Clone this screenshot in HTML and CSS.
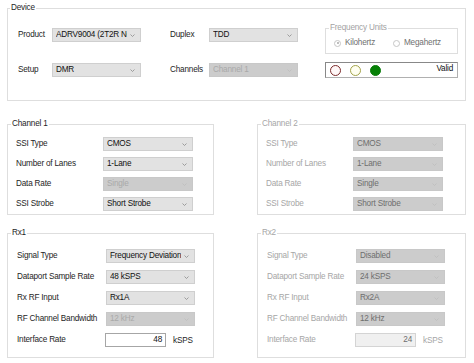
FILE: index.html
```html
<!DOCTYPE html>
<html>
<head>
<meta charset="utf-8">
<link rel="stylesheet" href="styles.css">
</head>
<body>
<div class="page">
  <fieldset class="group device">
    <legend>Device</legend>
    <div class="device-grid">
      <span class="lbl c1 r1">Product</span>
      <div class="combo c2 r1"><span class="val">ADRV9004 (2T2R Non-LVDS)</span><svg class="arr" viewBox="0 0 5 3"><path d="M0.5 0.5 L2.5 2.5 L4.5 0.5"/></svg></div>
      <span class="lbl c4 r1">Duplex</span>
      <div class="combo c5 r1"><span class="val">TDD</span><svg class="arr" viewBox="0 0 5 3"><path d="M0.5 0.5 L2.5 2.5 L4.5 0.5"/></svg></div>
      <fieldset class="freq c7 r1">
        <legend>Frequency Units</legend>
        <div class="radios">
          <label class="radio"><span class="dot checked"></span>Kilohertz</label>
          <label class="radio"><span class="dot"></span>Megahertz</label>
        </div>
      </fieldset>
      <span class="lbl c1 r2">Setup</span>
      <div class="combo c2 r2"><span class="val">DMR</span><svg class="arr" viewBox="0 0 5 3"><path d="M0.5 0.5 L2.5 2.5 L4.5 0.5"/></svg></div>
      <span class="lbl c4 r2">Channels</span>
      <div class="combo dis c5 r2"><span class="val">Channel 1</span><svg class="arr" viewBox="0 0 5 3"><path d="M0.5 0.5 L2.5 2.5 L4.5 0.5"/></svg></div>
      <div class="leds c7 r2">
        <span class="led red"></span>
        <span class="led yellow"></span>
        <span class="led green"></span>
        <span class="status">Valid</span>
      </div>
    </div>
  </fieldset>

  <div class="pair">
    <fieldset class="group chan">
      <legend>Channel 1</legend>
      <div class="row"><span class="lbl">SSI Type</span><div class="combo"><span class="val">CMOS</span><svg class="arr" viewBox="0 0 5 3"><path d="M0.5 0.5 L2.5 2.5 L4.5 0.5"/></svg></div></div>
      <div class="row"><span class="lbl">Number of Lanes</span><div class="combo"><span class="val">1-Lane</span><svg class="arr" viewBox="0 0 5 3"><path d="M0.5 0.5 L2.5 2.5 L4.5 0.5"/></svg></div></div>
      <div class="row"><span class="lbl">Data Rate</span><div class="combo dis"><span class="val">Single</span><svg class="arr" viewBox="0 0 5 3"><path d="M0.5 0.5 L2.5 2.5 L4.5 0.5"/></svg></div></div>
      <div class="row"><span class="lbl">SSI Strobe</span><div class="combo"><span class="val">Short Strobe</span><svg class="arr" viewBox="0 0 5 3"><path d="M0.5 0.5 L2.5 2.5 L4.5 0.5"/></svg></div></div>
    </fieldset>
    <fieldset class="group chan off">
      <legend>Channel 2</legend>
      <div class="row"><span class="lbl">SSI Type</span><div class="combo"><span class="val">CMOS</span><svg class="arr" viewBox="0 0 5 3"><path d="M0.5 0.5 L2.5 2.5 L4.5 0.5"/></svg></div></div>
      <div class="row"><span class="lbl">Number of Lanes</span><div class="combo"><span class="val">1-Lane</span><svg class="arr" viewBox="0 0 5 3"><path d="M0.5 0.5 L2.5 2.5 L4.5 0.5"/></svg></div></div>
      <div class="row"><span class="lbl">Data Rate</span><div class="combo"><span class="val">Single</span><svg class="arr" viewBox="0 0 5 3"><path d="M0.5 0.5 L2.5 2.5 L4.5 0.5"/></svg></div></div>
      <div class="row"><span class="lbl">SSI Strobe</span><div class="combo"><span class="val">Short Strobe</span><svg class="arr" viewBox="0 0 5 3"><path d="M0.5 0.5 L2.5 2.5 L4.5 0.5"/></svg></div></div>
    </fieldset>
  </div>

  <div class="pair rxpair">
    <fieldset class="group rx">
      <legend>Rx1</legend>
      <div class="row"><span class="lbl">Signal Type</span><div class="combo"><span class="val">Frequency Deviation</span><svg class="arr" viewBox="0 0 5 3"><path d="M0.5 0.5 L2.5 2.5 L4.5 0.5"/></svg></div></div>
      <div class="row"><span class="lbl">Dataport Sample Rate</span><div class="combo"><span class="val">48 kSPS</span><svg class="arr" viewBox="0 0 5 3"><path d="M0.5 0.5 L2.5 2.5 L4.5 0.5"/></svg></div></div>
      <div class="row"><span class="lbl">Rx RF Input</span><div class="combo"><span class="val">Rx1A</span><svg class="arr" viewBox="0 0 5 3"><path d="M0.5 0.5 L2.5 2.5 L4.5 0.5"/></svg></div></div>
      <div class="row"><span class="lbl">RF Channel Bandwidth</span><div class="combo dis"><span class="val">12 kHz</span><svg class="arr" viewBox="0 0 5 3"><path d="M0.5 0.5 L2.5 2.5 L4.5 0.5"/></svg></div></div>
      <div class="row"><span class="lbl">Interface Rate</span><div class="rate"><span class="box">48</span><span class="unit">kSPS</span></div></div>
    </fieldset>
    <fieldset class="group rx off">
      <legend>Rx2</legend>
      <div class="row"><span class="lbl">Signal Type</span><div class="combo"><span class="val">Disabled</span><svg class="arr" viewBox="0 0 5 3"><path d="M0.5 0.5 L2.5 2.5 L4.5 0.5"/></svg></div></div>
      <div class="row"><span class="lbl">Dataport Sample Rate</span><div class="combo"><span class="val">24 kSPS</span><svg class="arr" viewBox="0 0 5 3"><path d="M0.5 0.5 L2.5 2.5 L4.5 0.5"/></svg></div></div>
      <div class="row"><span class="lbl">Rx RF Input</span><div class="combo"><span class="val">Rx2A</span><svg class="arr" viewBox="0 0 5 3"><path d="M0.5 0.5 L2.5 2.5 L4.5 0.5"/></svg></div></div>
      <div class="row"><span class="lbl">RF Channel Bandwidth</span><div class="combo"><span class="val">12 kHz</span><svg class="arr" viewBox="0 0 5 3"><path d="M0.5 0.5 L2.5 2.5 L4.5 0.5"/></svg></div></div>
      <div class="row"><span class="lbl">Interface Rate</span><div class="rate"><span class="box">24</span><span class="unit">kSPS</span></div></div>
    </fieldset>
  </div>
</div>
</body>
</html>
```

FILE: styles.css
```css
* { box-sizing: border-box; }
html, body { margin: 0; padding: 0; background: #ffffff; }
body {
  font-family: "Liberation Sans", Arial, sans-serif;
  font-size: 8.2px;
  letter-spacing: -0.2px;
  color: #1e1e1e;
}
.page { padding: 3px 0 0 7px; width: 474px; }

fieldset {
  margin: 0;
  padding: 0;
  border: 1px solid #dedede;
  min-width: 0;
}
legend {
  padding: 0 1px;
  margin-left: 2px;
  line-height: 10px;
  height: 10px;
  color: #1e1e1e;
}

/* Device */
.device { width: 459px; padding: 10px 0 22px 10px; }
.device > legend { margin-left: -8px; }
.device-grid {
  display: grid;
  grid-template-columns: 34px 89px 29px 39px 89px 27px 133px;
  grid-template-rows: 31px 16px;
  row-gap: 8px;
}
.c1 { grid-column: 1; }
.c2 { grid-column: 2; }
.c4 { grid-column: 4; }
.c5 { grid-column: 5; }
.c7 { grid-column: 7; }
.r1 { grid-row: 1; }
.r2 { grid-row: 2; }
.device-grid .r1.lbl, .device-grid .r1.combo { align-self: start; margin-top: 5px; }
.device-grid .r2.lbl, .device-grid .r2.combo { align-self: center; }

.lbl { line-height: 14px; white-space: nowrap; }

.combo {
  height: 14px;
  background: #e2e2e2;
  border: 1px solid #cfcfcf;
  display: flex;
  align-items: center;
  padding-left: 3px;
  overflow: hidden;
  color: #111;
}
.combo .val {
  flex: 1;
  white-space: nowrap;
  overflow: hidden;
  line-height: 12px;
}
.combo .arr {
  width: 5px;
  height: 3px;
  margin: 0 5px 0 3px;
  flex: none;
  fill: none;
  stroke: #8a8a8a;
  stroke-width: 0.8;
}
.combo.dis { background: #cccccc; border-color: #c8c8c8; color: #a9a9a9; }
.combo.dis .arr { stroke: #bdbdbd; }

/* Frequency units */
.freq { height: 31px; }
.freq legend { color: #a3a3a3; margin-left: 3px; }
.radios { display: flex; align-items: center; height: 20px; padding-left: 8px; color: #707070; }
.radio { display: flex; align-items: center; gap: 4px; line-height: 10px; }
.radio:first-child { width: 59px; }
.dot {
  width: 7px; height: 7px;
  border: 1px solid #c6c6c6;
  border-radius: 50%;
  background: #fff;
  position: relative;
}
.dot.checked::after {
  content: "";
  position: absolute;
  left: 1.5px; top: 1.5px;
  width: 2px; height: 2px;
  border-radius: 50%;
  background: #a8a8a8;
}

/* LEDs */
.leds {
  height: 16px;
  border: 1px solid #888888;
  border-right-color: #b0b0b0;
  border-bottom-color: #b0b0b0;
  display: flex;
  align-items: center;
  padding-left: 4px;
  gap: 9px;
}
.led {
  width: 11px; height: 11px;
  border-radius: 50%;
  border: 1.3px solid;
  flex: none;
}
.led.red { border-color: #7b2b2b; background: #fff7f7; }
.led.yellow { border-color: #a3a34a; background: #fffff0; }
.led.green { border-color: #0a7d0a; background: #078107; }
.status { margin-left: auto; align-self: flex-start; line-height: 9px; padding: 1px 4px 0 0; color: #111; }

/* Pairs */
.pair {
  display: grid;
  grid-template-columns: 207px 209px;
  column-gap: 43px;
  margin-top: 18px;
}
.rxpair { margin-top: 13px; }

.chan { padding: 5px 0 0 8px; }
.chan > legend { margin-left: -5px; }
.chan .row {
  display: grid;
  grid-template-columns: 87px 90px;
  height: 20px;
  align-items: center;
}

.rx { padding: 11px 0 10px 9px; }
.rx > legend { margin-left: -6px; }
.rx .row {
  display: grid;
  grid-template-columns: 89px 89px;
  height: 14px;
  align-items: center;
  margin-bottom: 7px;
}
.rx .row:last-child { margin-bottom: 0; }
.rate { display: flex; align-items: center; margin-left: -1px; }
.rate .box {
  width: 61px;
  height: 14px;
  border: 1px solid #a6a6a6;
  background: #fff;
  text-align: right;
  padding-right: 3px;
  line-height: 12px;
  color: #111;
}
.rate .unit { margin-left: 7px; }

/* disabled groups */
.off legend, .off .lbl, .off .unit { color: #a6a6a6; }
.off .combo { background: #cccccc; border-color: #c8c8c8; color: #6e6e6e; }
.off .combo .arr { stroke: #bdbdbd; }
.off .rate .box { background: #f0f0f0; border-color: #d4d4d4; color: #6e6e6e; }
```
